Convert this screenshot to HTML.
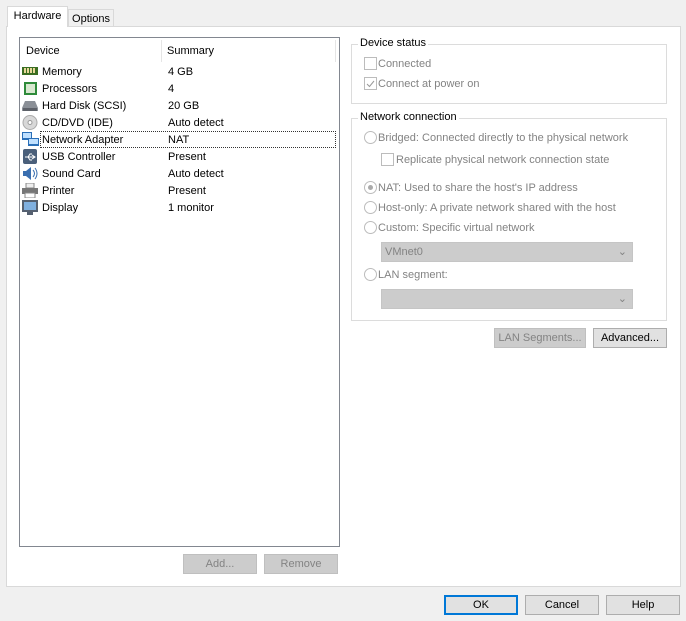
<!DOCTYPE html><html><head><style>
*{box-sizing:border-box}
body{margin:0;width:686px;height:621px;background:#f0f0f0;font-family:"Liberation Sans",sans-serif;font-size:11px;color:#000;position:relative;overflow:hidden}
.a{position:absolute}
.page{left:6px;top:26px;width:675px;height:561px;background:#fff;border:1px solid #d9d9d9}
.btn{position:absolute;height:20px;border:1px solid #adadad;background:#e1e1e1;text-align:center;line-height:18px}
.dis{background:#ccc;border-color:#bfbfbf;color:#838383}
.grp{position:absolute;border:1px solid #dcdcdc}
.gt{position:absolute;background:#fff;padding:0 2px;top:-8px;left:6px}
.g{color:#838383}
.cb{position:absolute;width:13px;height:13px;border:1px solid #bcbcbc;background:#fff}
.rb{position:absolute;width:13px;height:13px;border:1px solid #bcbcbc;border-radius:50%;background:#fff}
.row{position:absolute;left:22px;height:17px;line-height:19px;width:314px}
.row .s{position:absolute;left:146px}
.ic{position:absolute;left:0;top:1px;width:16px;height:15px}
.sel{position:absolute;width:134px;height:20px;background:#ccc;border:1px solid #c5c5c5;color:#838383;line-height:18px;padding-left:3px}
.l{margin-top:2px}
</style></head><body>
<div class="a" style="left:68px;top:9px;width:46px;height:18px;background:#f0f0f0;border:1px solid #d9d9d9;text-align:center;line-height:19px">Options</div>
<div class="a page"></div>
<div class="a" style="left:7px;top:6px;width:61px;height:21px;background:#fff;border:1px solid #d9d9d9;border-bottom:none;text-align:center;line-height:19px">Hardware</div>
<div class="a" style="left:19px;top:37px;width:321px;height:510px;border:1px solid #828790;background:#fff"></div>
<div class="a" style="left:26px;top:45px">Device</div>
<div class="a" style="left:161px;top:40px;width:1px;height:22px;background:#e5e5e5"></div>
<div class="a" style="left:335px;top:40px;width:1px;height:22px;background:#e5e5e5"></div>
<div class="a" style="left:167px;top:45px">Summary</div>

<div class="row" style="top:63px"><svg class="ic" viewBox="0 0 16 15"><rect x="0" y="3" width="16" height="8" fill="#3b6e22"/><rect x="2" y="4" width="2" height="5" fill="#e8d99a"/><rect x="5" y="4" width="2" height="5" fill="#e8d99a"/><rect x="8" y="4" width="2" height="5" fill="#e8d99a"/><rect x="11" y="4" width="2" height="5" fill="#e8d99a"/></svg><span style="margin-left:20px">Memory</span><span class="s">4 GB</span></div>
<div class="row" style="top:80px"><svg class="ic" viewBox="0 0 16 15"><rect x="2" y="1" width="13" height="13" fill="#2e8b3a"/><rect x="4" y="3" width="9" height="9" fill="#d8e8d0"/></svg><span style="margin-left:20px">Processors</span><span class="s">4</span></div>
<div class="row" style="top:97px"><svg class="ic" viewBox="0 0 16 15"><path d="M3 3h10l3 7v3H0v-3z" fill="#8a8f96"/><rect x="1" y="10" width="14" height="3" fill="#5d6168"/></svg><span style="margin-left:20px">Hard Disk (SCSI)</span><span class="s">20 GB</span></div>
<div class="row" style="top:114px"><svg class="ic" viewBox="0 0 16 15"><circle cx="8" cy="7.5" r="7" fill="#d8d8d8" stroke="#aaa"/><circle cx="8" cy="7.5" r="2" fill="#fff" stroke="#999"/></svg><span style="margin-left:20px">CD/DVD (IDE)</span><span class="s">Auto detect</span></div>
<div class="row" style="top:131px;outline:1px dotted #333;outline-offset:-1px;left:40px;width:296px"><span style="margin-left:2px">Network Adapter</span><span class="s" style="left:128px">NAT</span></div>
<svg class="a" style="left:22px;top:132px" width="18" height="16" viewBox="0 0 18 16"><rect x="0" y="0" width="10" height="8" fill="#2a6fb8"/><rect x="1" y="1" width="8" height="5" fill="#bfe0ff"/><rect x="6" y="6" width="11" height="8" fill="#2a6fb8"/><rect x="7" y="7" width="9" height="5" fill="#bfe0ff"/></svg>
<div class="row" style="top:148px"><svg class="ic" viewBox="0 0 16 15"><rect x="1" y="0" width="14" height="15" rx="2" fill="#4a5f7a"/><path d="M3 8h10M10 6l3 2-3 2M6 8l2-3h2M6 8l2 3h2" stroke="#fff" fill="none"/></svg><span style="margin-left:20px">USB Controller</span><span class="s">Present</span></div>
<div class="row" style="top:165px"><svg class="ic" viewBox="0 0 16 15"><path d="M1 5h3l5-4v13l-5-4H1z" fill="#3a6fb0"/><path d="M11 4q3 3.5 0 7M13 2q4 5.5 0 11" stroke="#3a6fb0" fill="none"/></svg><span style="margin-left:20px">Sound Card</span><span class="s">Auto detect</span></div>
<div class="row" style="top:182px"><svg class="ic" viewBox="0 0 16 15"><rect x="4" y="0" width="8" height="5" fill="#eee" stroke="#888"/><rect x="0" y="5" width="16" height="6" fill="#777"/><rect x="3" y="10" width="10" height="5" fill="#fff" stroke="#888"/></svg><span style="margin-left:20px">Printer</span><span class="s">Present</span></div>
<div class="row" style="top:199px"><svg class="ic" viewBox="0 0 16 15"><rect x="0" y="0" width="16" height="12" fill="#556070"/><rect x="2" y="2" width="12" height="8" fill="#7fb0e0"/><rect x="5" y="12" width="6" height="3" fill="#556070"/></svg><span style="margin-left:20px">Display</span><span class="s">1 monitor</span></div>

<div class="btn dis" style="left:183px;top:554px;width:74px">Add...</div>
<div class="btn dis" style="left:264px;top:554px;width:74px">Remove</div>

<div class="grp" style="left:351px;top:44px;width:316px;height:60px"><span class="gt">Device status</span></div>
<div class="cb" style="left:364px;top:57px"></div><div class="a g" style="left:378px;top:58px">Connected</div>
<div class="cb" style="left:364px;top:77px"><svg width="11" height="11" style="position:absolute;left:0;top:0"><path d="M2 6l2.5 2.5L9 3" stroke="#999" fill="none"/></svg></div><div class="a g" style="left:378px;top:78px">Connect at power on</div>

<div class="grp" style="left:351px;top:118px;width:316px;height:203px"><span class="gt">Network connection</span></div>
<div class="rb" style="left:364px;top:131px"></div><div class="a g" style="left:378px;top:132px">Bridged: Connected directly to the physical network</div>
<div class="cb" style="left:381px;top:153px"></div><div class="a g" style="left:396px;top:154px">Replicate physical network connection state</div>
<div class="rb" style="left:364px;top:181px"><div style="position:absolute;left:3px;top:3px;width:5px;height:5px;border-radius:50%;background:#aaa"></div></div><div class="a g" style="left:378px;top:182px">NAT: Used to share the host's IP address</div>
<div class="rb" style="left:364px;top:201px"></div><div class="a g" style="left:378px;top:202px">Host-only: A private network shared with the host</div>
<div class="rb" style="left:364px;top:221px"></div><div class="a g" style="left:378px;top:222px">Custom: Specific virtual network</div>
<div class="sel" style="left:381px;top:242px;width:252px">VMnet0<span style="position:absolute;right:5px;top:0">&#8964;</span></div>
<div class="rb" style="left:364px;top:268px"></div><div class="a g" style="left:378px;top:269px">LAN segment:</div>
<div class="sel" style="left:381px;top:289px;width:252px"><span style="position:absolute;right:5px;top:0">&#8964;</span></div>

<div class="btn dis" style="left:494px;top:328px;width:92px">LAN Segments...</div>
<div class="btn" style="left:593px;top:328px;width:74px">Advanced...</div>

<div class="btn" style="left:444px;top:595px;width:74px;border:2px solid #0078d7;line-height:16px">OK</div>
<div class="btn" style="left:525px;top:595px;width:74px">Cancel</div>
<div class="btn" style="left:606px;top:595px;width:74px">Help</div>
</body></html>
